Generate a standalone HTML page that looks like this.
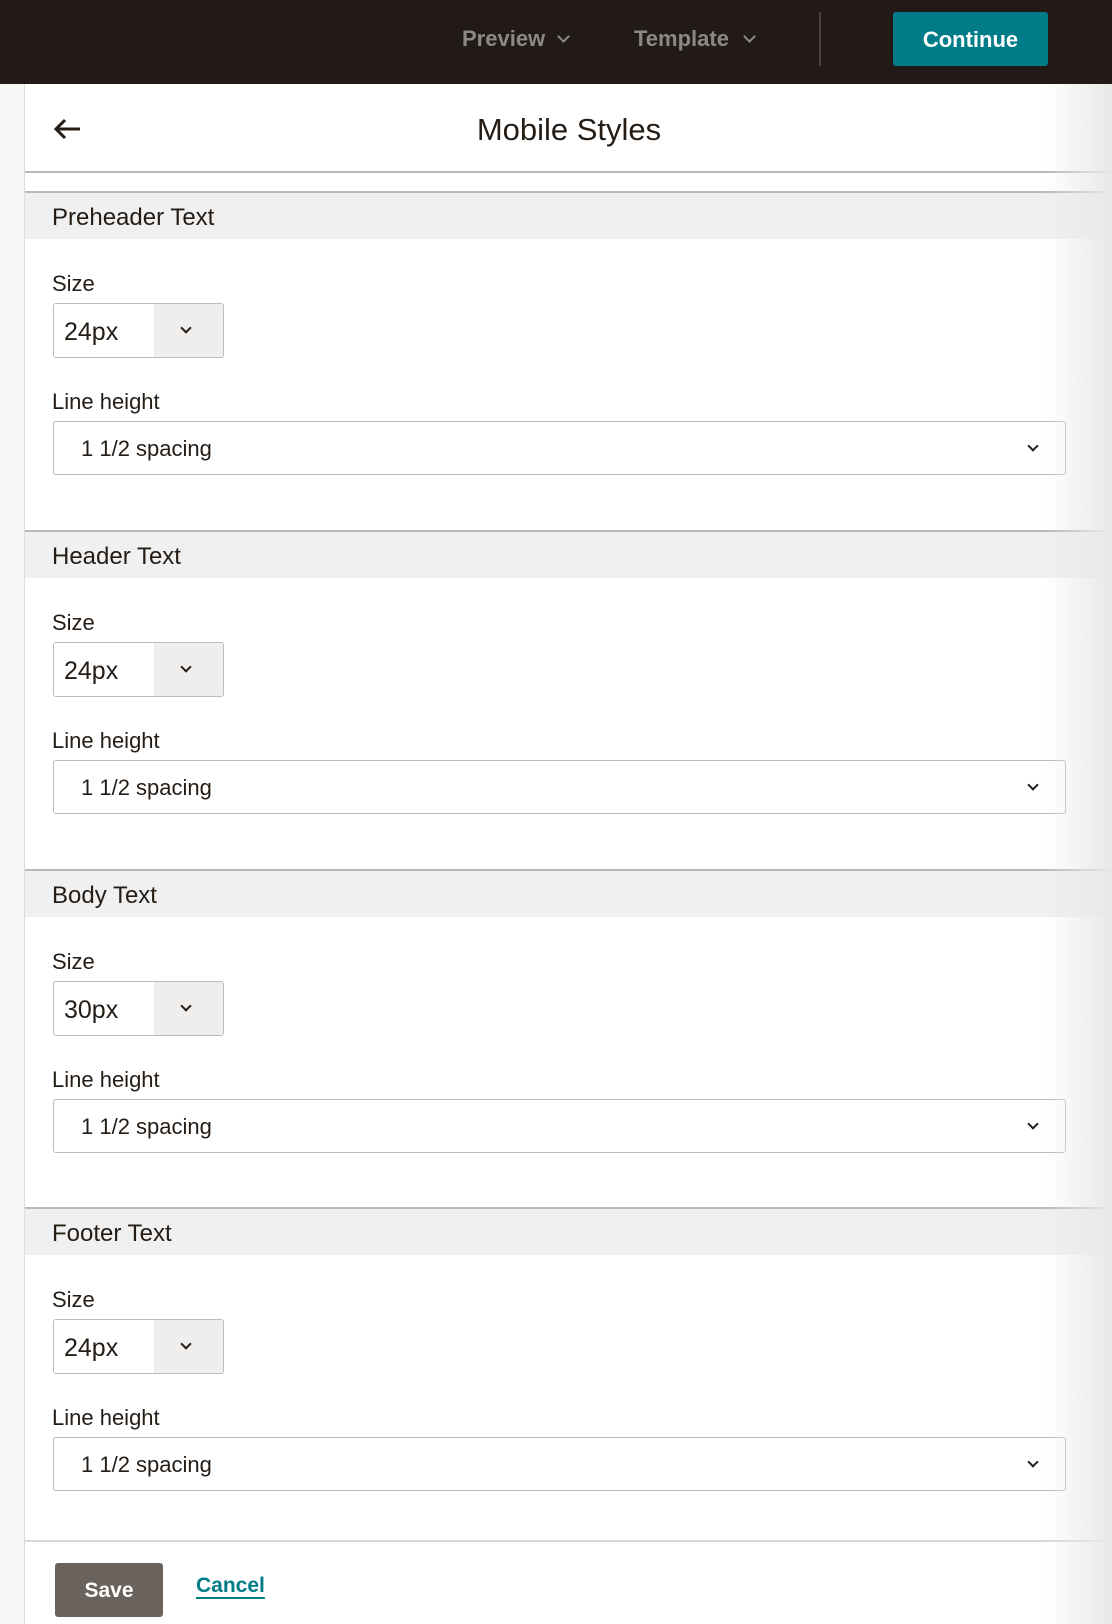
<!DOCTYPE html>
<html><head><meta charset="utf-8"><style>
*{box-sizing:border-box;margin:0;padding:0}
body{width:1112px;height:1624px;position:relative;overflow:hidden;background:#f7f7f7;font-family:"Liberation Sans",sans-serif;color:#241c15}
.top{position:absolute;left:0;top:0;width:1112px;height:84px;background:#211a16}
.nav{position:absolute;top:24px;font-size:22px;font-weight:bold;color:#8d8884;line-height:30px}
.chev{position:absolute;width:9px;height:9px;border-right:2.5px solid #8d8884;border-bottom:2.5px solid #8d8884;transform:rotate(45deg)}
.cont{position:absolute;left:893px;top:12px;width:155px;height:54px;background:#007c89;border-radius:3px;color:#fff;font-size:22px;font-weight:bold;text-align:center;line-height:56px}
.panel{position:absolute;left:24px;top:84px;width:1088px;height:1540px;background:#fff;border-left:1px solid #ddd}
.abs{position:absolute}
.sec{position:absolute;left:0;width:1088px;height:339px}
.sh{position:absolute;left:0;top:0;width:1088px;height:48px;background:#f0f0f0;border-top:2px solid #b9b9b9}
.sh span{position:absolute;left:27px;top:11px;font-size:24px;color:#241c15}
.lbl{position:absolute;left:27px;font-size:22px;color:#241c15}
.ss{position:absolute;left:28px;top:112px;width:171px;height:55px;border:1.5px solid #bbb;border-radius:3px;background:#fff;overflow:hidden}
.ss .g{position:absolute;left:100px;top:0;width:70px;height:55px;background:#efeeec}
.ss .v{position:absolute;left:10px;top:14px;font-size:25px}
.dc{position:absolute;width:8px;height:8px;border-right:2.5px solid #241c15;border-bottom:2.5px solid #241c15;transform:rotate(45deg)}
.ws{position:absolute;left:28px;top:230px;width:1013px;height:54px;border:1.5px solid #bbb;border-radius:3px;background:#fff}
.ws .v{position:absolute;left:27px;top:14px;font-size:22px}
.shade{position:absolute;left:1045px;top:84px;width:67px;height:1540px;background:linear-gradient(to right,rgba(235,235,235,0),rgba(232,232,232,1))}
</style></head><body>
<div class="top">
 <div class="nav" style="left:462px">Preview</div><div class="chev" style="left:559px;top:32px"></div>
 <div class="nav" style="left:634px">Template</div><div class="chev" style="left:745px;top:32px"></div>
 <div class="abs" style="left:819px;top:12px;width:2px;height:54px;background:#4a423d"></div>
 <div class="cont">Continue</div>
</div>
<div class="panel">
 <svg class="abs" style="left:29px;top:34px" width="28" height="22" viewBox="0 0 28 22"><path d="M2 11H26M11 2L2 11L11 20" stroke="#241c15" stroke-width="3" fill="none"/></svg>
 <div class="abs" style="left:0;width:1088px;top:28px;text-align:center;font-size:31px;color:#241c15">Mobile Styles</div>
 <div class="abs" style="left:0;top:87px;width:1088px;height:2px;background:#b9b9b9"></div>

 <div class="sec" style="top:107px">
  <div class="sh"><span>Preheader Text</span></div>
  <div class="lbl" style="top:80px">Size</div>
  <div class="ss"><div class="g"></div><div class="v">24px</div><div class="dc" style="left:128px;top:20px"></div></div>
  <div class="lbl" style="top:198px">Line height</div>
  <div class="ws"><div class="v">1 1/2 spacing</div><div class="dc" style="left:975px;top:20px"></div></div>
 </div>
 <div class="sec" style="top:446px">
  <div class="sh"><span>Header Text</span></div>
  <div class="lbl" style="top:80px">Size</div>
  <div class="ss"><div class="g"></div><div class="v">24px</div><div class="dc" style="left:128px;top:20px"></div></div>
  <div class="lbl" style="top:198px">Line height</div>
  <div class="ws"><div class="v">1 1/2 spacing</div><div class="dc" style="left:975px;top:20px"></div></div>
 </div>
 <div class="sec" style="top:785px">
  <div class="sh"><span>Body Text</span></div>
  <div class="lbl" style="top:80px">Size</div>
  <div class="ss"><div class="g"></div><div class="v">30px</div><div class="dc" style="left:128px;top:20px"></div></div>
  <div class="lbl" style="top:198px">Line height</div>
  <div class="ws"><div class="v">1 1/2 spacing</div><div class="dc" style="left:975px;top:20px"></div></div>
 </div>
 <div class="sec" style="top:1123px">
  <div class="sh"><span>Footer Text</span></div>
  <div class="lbl" style="top:80px">Size</div>
  <div class="ss"><div class="g"></div><div class="v">24px</div><div class="dc" style="left:128px;top:20px"></div></div>
  <div class="lbl" style="top:198px">Line height</div>
  <div class="ws"><div class="v">1 1/2 spacing</div><div class="dc" style="left:975px;top:20px"></div></div>
 </div>

 <div class="abs" style="left:0;top:1456px;width:1088px;height:2px;background:#d8d8d8"></div>
 <div class="abs" style="left:30px;top:1479px;width:108px;height:54px;background:#69625d;border-radius:3px;color:#fff;font-size:21px;font-weight:bold;text-align:center;line-height:56px">Save</div>
 <div class="abs" style="left:171px;top:1490px;font-size:21px;font-weight:bold;color:#007c89;text-decoration:underline;text-underline-offset:5px;text-decoration-thickness:2px">Cancel</div>
</div>
<div class="shade"></div>
</body></html>
